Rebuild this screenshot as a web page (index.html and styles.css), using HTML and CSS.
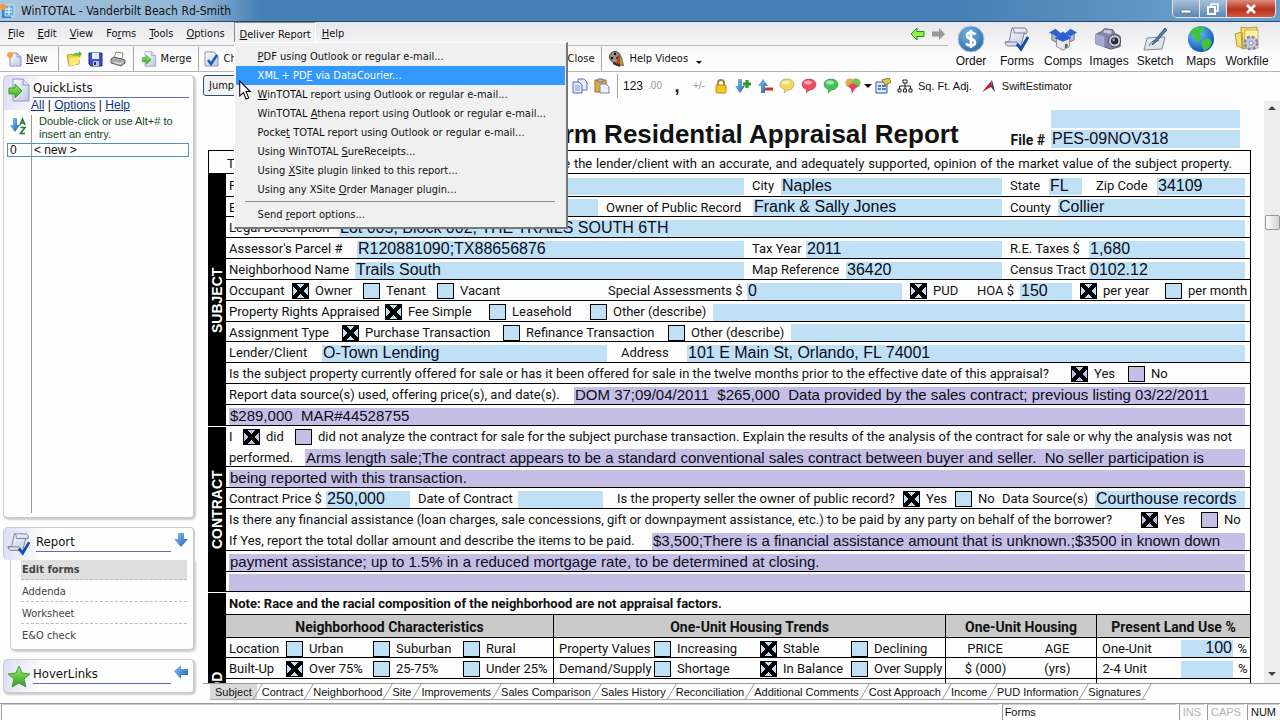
FILE: index.html
```html
<!DOCTYPE html>
<html lang="en">
<head>
<meta charset="utf-8">
<title>WinTOTAL - Vanderbilt Beach Rd-Smith</title>
<link rel="stylesheet" href="styles.css">
</head>
<body>
<svg class="defs" aria-hidden="true">
  <defs>
    <linearGradient id="gb" x1="0" y1="0" x2="1" y2="1"><stop offset="0" stop-color="#8cc8f4"/><stop offset="1" stop-color="#1b5fae"/></linearGradient>
    <linearGradient id="gg" x1="0" y1="0" x2="0" y2="1"><stop offset="0" stop-color="#9df06c"/><stop offset="1" stop-color="#2fa022"/></linearGradient>
    <linearGradient id="gp" x1="0" y1="0" x2="1" y2="1"><stop offset="0" stop-color="#fff"/><stop offset="1" stop-color="#bcc6e2"/></linearGradient>
    <radialGradient id="globe" cx=".35" cy=".3" r=".8"><stop offset="0" stop-color="#6ec4ff"/><stop offset="1" stop-color="#0a47a8"/></radialGradient>
    <radialGradient id="disc" cx=".4" cy=".3" r=".8"><stop offset="0" stop-color="#74b4e2"/><stop offset="1" stop-color="#23679f"/></radialGradient>
    <symbol id="scroll" viewBox="0 0 26 26"><path d="M8 2h13q3 1 2 5l-3 1-3 12H4q-3-1-3-4h4z" fill="url(#gp)" stroke="#7c7f99"/><path d="M8 2q3 1 2 5h11M1 16h12l2 5" fill="none" stroke="#7c7f99"/><path d="M13 18l4 5 7-12" fill="none" stroke="#1550a8" stroke-width="3"/></symbol>
    <symbol id="pagearrow" viewBox="0 0 22 24"><path d="M5 1h10l6 6v16H5z" fill="url(#gp)" stroke="#8a92b8"/><path d="M15 1v6h6" fill="#dfe5f6" stroke="#8a92b8"/><path d="M1 10h6V6l7 7-7 7v-4H1z" fill="url(#gg)" stroke="#3c9a2a"/></symbol>
    <symbol id="bubble" viewBox="0 0 16 16"><path d="M8 1c4 0 7 2 7 5.500S12 12 9 12l-4 3 .5-3.500C3 11 1 9 1 6.500 1 3 4 1 8 1z" stroke="#0003"/><ellipse cx="7" cy="4.500" rx="4" ry="2" fill="#fff8"/></symbol>
  </defs>
</svg>
<div class="app">
  <header class="titlebar">
    <svg class="i16" viewBox="0 0 16 16"><path d="M2 4h9v11H2z" fill="#2f86c9"/><path d="M5 2h9v11H5z" fill="#5fb0e6" stroke="#fff" stroke-width=".6"/><path d="M5 6h7M5 9h7M9 3v9" stroke="#fff"/><circle cx="3" cy="4" r="3" fill="#f3953a"/></svg>
    <h1 class="caption">WinTOTAL - Vanderbilt Beach Rd-Smith</h1>
    <div class="winbtns">
      <button class="wb" aria-label="Minimize"><svg viewBox="0 0 16 14"><path d="M3 8h10v3H3z" fill="#fff" stroke="#456"  stroke-width=".6"/></svg></button>
      <button class="wb" aria-label="Restore"><svg viewBox="0 0 16 14"><path d="M6 2h7v7h-7z" fill="none" stroke="#fff" stroke-width="1.500"/><path d="M3 5h7v7H3z" fill="#7893ae" stroke="#fff" stroke-width="2"/></svg></button>
      <button class="wb close" aria-label="Close"><svg viewBox="0 0 16 14"><path d="M4 3l8 8M12 3l-8 8" stroke="#fff" stroke-width="2.600"/></svg></button>
    </div>
  </header>

  <div class="top">
    <div class="topleft">
      <nav class="menubar">
        <button><u>F</u>ile</button><button><u>E</u>dit</button><button><u>V</u>iew</button><button>Fo<u>r</u>ms</button><button><u>T</u>ools</button><button><u>O</u>ptions</button>
        <div class="menuwrap">
          <button class="open"><u>D</u>eliver Report</button>
          <div class="menu">
            <button><u>P</u>DF using Outlook or regular e-mail...</button>
            <button class="hot">XML + PD<u>F</u> via DataCourier...</button>
            <button><u>W</u>inTOTAL report using Outlook or regular e-mail...</button>
            <button>WinTOTAL <u>A</u>thena report using Outlook or regular e-mail...</button>
            <button>Pocke<u>t</u> TOTAL report using Outlook or regular e-mail...</button>
            <button>Using WinTOTAL <u>S</u>ureReceipts...</button>
            <button>Using <u>X</u>Site plugin linked to this report...</button>
            <button>Using any XSite <u>O</u>rder Manager plugin...</button>
            <hr>
            <button>Send <u>r</u>eport options...</button>
            <svg class="cursor" viewBox="0 0 12 19"><path d="M1 1v14l3.500-3 2.500 6 2.500-1L7 11h4z" fill="#fff" stroke="#000"/></svg>
          </div>
        </div>
        <button><u>H</u>elp</button>
        <span class="grow"></span>
        <button class="nav" aria-label="Back"><svg viewBox="0 0 16 14"><path d="M1 7l6-6v3.500h7v5H7V13z" fill="#8ef04c" stroke="#2b8a1c"/></svg></button>
        <button class="nav" aria-label="Forward"><svg viewBox="0 0 16 14"><path d="M15 7L9 1v3.500H2v5h7V13z" fill="#989898"/></svg></button>
      </nav>
      <div class="toolbar">
        <button class="tb"><svg class="i16" viewBox="0 0 16 16"><path d="M4 2h7l4 4v9H4z" fill="url(#gp)" stroke="#8a92b8"/><path d="M11 2v4h4" fill="none" stroke="#8a92b8"/><circle cx="4" cy="4" r="3" fill="#f7a04a"/></svg><span><u>N</u>ew</span></button>
        <i class="sep"></i>
        <button class="tb" aria-label="Open"><svg class="i16" viewBox="0 0 16 16"><path d="M1 4l5-1 1 2 7-1-1 9-10 2z" fill="#f5d23c" stroke="#a88a10" stroke-width=".7"/><path d="M4 7l11-1-3 7-9 2z" fill="#ffea7a"/><path d="M7 5q0-4 6-3V0l3 3-3 3V4q-3-1-6 1z" fill="#4cbf34"/></svg></button>
        <button class="tb" aria-label="Save"><svg class="i16" viewBox="0 0 16 16"><path d="M1 2h13v13H3l-2-2z" fill="#3a4fc4" stroke="#1c2c7c"/><path d="M4 2h7v6H4z" fill="#e4ecfa"/><path d="M5 10h6v5H5z" fill="#b8c4dc"/><path d="M6 11h2v3H6z" fill="#234"/></svg></button>
        <button class="tb" aria-label="Print"><svg class="i16" viewBox="0 0 16 16"><path d="M4 7l2-6 7 1-1 6z" fill="#fff" stroke="#888"/><path d="M1 8l3-2 11 3v3l-4 3-10-3z" fill="#a6a9ae" stroke="#5e6268"/><path d="M4 11l6 2 3-2" stroke="#eee" fill="none"/></svg></button>
        <i class="sep"></i>
        <button class="tb"><svg class="i16"><use href="#pagearrow"/></svg><span>Merge</span></button>
        <i class="sep"></i>
        <div class="midgroup">
          <button class="tb"><svg class="i16" viewBox="0 0 16 16"><path d="M2 1h9l4 4v10H2z" fill="url(#gp)" stroke="#8a92b8"/><path d="M5 9l3 4 6-9" fill="none" stroke="#1c5cb8" stroke-width="2.500"/></svg><span>Check</span></button>
          <button class="tb">Close</button>
        </div>
        <i class="sep"></i>
        <button class="tb"><svg class="i16" viewBox="0 0 16 16"><circle cx="6" cy="6" r="5.500" fill="#9a938c" stroke="#4a423c"/><circle cx="6" cy="3" r="1.200"/><circle cx="3" cy="7" r="1.200"/><circle cx="8.500" cy="7" r="1.200"/><path d="M9 4l4 2 2 9-8-1z" fill="#c43a2c"/><path d="M11 6l2 1 1 7-3-1z" fill="#7db53c"/><path d="M4 12l7 3" stroke="#333" stroke-width="2"/></svg><span>Help Videos</span><b class="tri low"></b></button>
      </div>
    </div>
    <nav class="bigicons">
      <button><svg viewBox="0 0 28 28"><circle cx="14" cy="14" r="13" fill="url(#disc)" stroke="#b8c8d8"/><path d="M18.500 9.500Q17 7.500 14 7.500q-4 0-4 3 0 2.500 4 3.500t4 3.500q0 3-4 3-3.500 0-5-2M14 5v18" fill="none" stroke="#fff" stroke-width="2.600"/></svg>Order</button>
      <button><svg viewBox="0 0 28 28"><use href="#scroll" x="1" y="1" width="26" height="26"/></svg>Forms</button>
      <button><svg viewBox="0 0 30 28"><path d="M3 8v7l7 4V9zM20 8v10l7-3V8z" fill="#b9b9c4" stroke="#777"/><path d="M0 7l7-4 6 5-5 3zM17 8l6-5 7 4-7 4z" fill="#2c62d0"/><path d="M8 13l7 3 7-3v9l-7 4-7-4z" fill="#e8e8ea" stroke="#888"/><path d="M6 13l9-7 9 7-9 4z" fill="#2a5fd4"/><path d="M17 19h3v4l-3 1z" fill="#666"/></svg>Comps</button>
      <button><svg viewBox="0 0 30 28"><path d="M1 9l6-3 3-3 9 1 2 4 6 3v11l-10 3L1 19z" fill="#8484aa" stroke="#555a78"/><path d="M1 9l9 2v12L1 19z" fill="#a9a8d0"/><path d="M10 4l8 1-1 4-8-2z" fill="#c9cbd8"/><circle cx="21" cy="16" r="6.500" fill="#d4d4d8" stroke="#444"/><circle cx="21" cy="16" r="4" fill="#292c3a"/><circle cx="20" cy="15" r="1.500" fill="#8fa6c8"/></svg>Images</button>
      <button><svg viewBox="0 0 28 28"><path d="M6 13l18-1-3 12-18 1z" fill="#dfe5ec" stroke="#838c98"/><path d="M8 21q4-8 10-5" fill="none" stroke="#667" /><path d="M11 20l2-4L24 3l2 2-11 12z" fill="#4a82b4" stroke="#31485e" stroke-width=".8"/></svg>Sketch</button>
      <button><svg viewBox="0 0 28 28"><circle cx="14" cy="14" r="13" fill="url(#globe)"/><path d="M4 6q5-5 11-4l2 3-4 4 2 3-4 5-3-1-1-5-4-2zM15 16l6-3 4 4-3 6-5 3-2-5z" fill="#41c33c"/></svg>Maps</button>
      <button><svg viewBox="0 0 28 28"><path d="M2 9l7-2 1 16-6-2zM8 2l6 1 10-1v19l-15 3z" fill="#f6dc74" stroke="#b39a3c"/><path d="M12 5h13v18H11z" fill="#fdf0a8" stroke="#b39a3c" stroke-width=".7"/><circle cx="18" cy="18" r="6" fill="#c4c8e0" stroke="#8388a8" stroke-width="3" stroke-dasharray="3 1.700"/><circle cx="18" cy="18" r="5" fill="#c4c8e0"/><circle cx="18" cy="18" r="2" fill="#fff" stroke="#8388a8"/></svg>Workfile</button>
    </nav>
  </div>

  <div class="body">
    <aside class="side">
      <section class="panel quick">
        <h2><svg class="i24"><use href="#pagearrow"/></svg><span>QuickLists</span></h2>
        <p class="links"><a href="#">All</a> | <a href="#">Options</a> | <a href="#">Help</a></p>
        <div class="qgrid">
          <div class="qicon"><svg class="i18" viewBox="0 0 18 18"><path d="M4 1h4v7h3l-5 7-5-7h3z" fill="url(#gb)"/><path d="M11 8l2.500-6L16 8M12 6h3" fill="none" stroke="#1f7a34" stroke-width="1.600"/><path d="M11.500 10.500H16l-4.500 6H16" fill="none" stroke="#1f7a34" stroke-width="1.600"/></svg></div>
          <div class="qhint">Double-click or use Alt+# to insert an entry.</div>
          <div class="qrow"><span>0</span><span>&lt; new &gt;</span></div>
        </div>
      </section>
      <section class="report">
        <h2><svg class="i24"><use href="#scroll"/></svg><span>Report</span><svg class="arrow" viewBox="0 0 16 16"><path d="M5 1h6v6h4l-7 8-7-8h4z" fill="url(#gb)"/></svg></h2>
        <nav class="tasks"><a class="on" href="#">Edit forms</a><a href="#">Addenda</a><a href="#">Worksheet</a><a href="#">E&amp;O check</a></nav>
      </section>
      <section class="panel hover">
        <h2><svg class="i24" viewBox="0 0 24 24"><path d="M12 2l3 7 8 1-6 5 2 8-7-4-7 4 2-8-6-5 8-1z" fill="url(#gg)" stroke="#4b9a3c"/></svg><span>HoverLinks</span><svg class="arrow" viewBox="0 0 16 16"><path d="M1 7l7-6v4h7v6H8v4z" fill="url(#gb)"/></svg></h2>
      </section>
    </aside>

    <main class="main">
      <div class="formbar">
        <div class="jumpgroup"><button class="jump">Jump</button></div>
        <button class="fb" aria-label="Copy"><svg viewBox="0 0 16 16"><path d="M6 1h6l3 3v8H6z" fill="#e8edfb" stroke="#5c6cb8"/><path d="M1 4h6l3 3v8H1z" fill="#dfe6fa" stroke="#5c6cb8"/><path d="M3 8h5M3 10h5M3 12h5" stroke="#8d9ad0"/></svg></button>
        <button class="fb" aria-label="Paste"><svg viewBox="0 0 16 16"><path d="M1 2h11v12H1z" fill="#e3a945" stroke="#9c6c1c"/><path d="M4 1h5v3H4z" fill="#bbb" stroke="#777"/><path d="M6 6h6l3 3v6H6z" fill="#eef2fc" stroke="#7480b0"/></svg></button>
        <i class="sep"></i>
        <button class="fb txt">123</button>
        <button class="fb dim">.00</button>
        <button class="fb comma">,</button>
        <button class="fb dim">+/-</button>
        <button class="fb" aria-label="Lock"><svg viewBox="0 0 16 16"><path d="M5 8V5q0-3 3-3t3 3v3" fill="none" stroke="#9a8a4a" stroke-width="2"/><rect x="3" y="7" width="10" height="8" rx="1" fill="#fcc81e" stroke="#b98808"/></svg></button>
        <button class="fb" aria-label="Add line"><svg viewBox="0 0 16 16"><path d="M3 1h4v7h3l-5 7-5-7h3z" fill="url(#gb)"/><path d="M12 2v8M8 6h8" stroke="#2b9a24" stroke-width="3"/></svg></button>
        <button class="fb" aria-label="Remove line"><svg viewBox="0 0 16 16"><path d="M4 15h4V8h3L6 1 1 8h3z" fill="url(#gb)"/><path d="M8 11h8" stroke="#d8321f" stroke-width="3"/></svg></button>
        <button class="fb" aria-label="Yellow note"><svg class="by"><use href="#bubble"/></svg></button>
        <button class="fb" aria-label="Red note"><svg class="br"><use href="#bubble"/></svg></button>
        <button class="fb" aria-label="Green note"><svg class="bg"><use href="#bubble"/></svg></button>
        <button class="fb" aria-label="Notes"><svg viewBox="0 0 16 16"><circle cx="5" cy="5" r="4.500" fill="#e8a84a"/><circle cx="11" cy="5" r="4.500" fill="#6cc452"/><path d="M3 8q5-5 10 0l-4 4-2 4-1-5z" fill="#dd4658"/></svg></button>
        <b class="tri"></b>
        <button class="fb" aria-label="Properties"><svg viewBox="0 0 16 16"><path d="M1 4h11v11H1z" fill="#dfe9fb" stroke="#2b58a8"/><path d="M3 8h3M3 11h3M7 8h4M7 11h4" stroke="#2b58a8" stroke-width="1.500"/><path d="M7 2l7-2 2 4-6 3z" fill="#e8c84a" stroke="#8a7018"/></svg></button>
        <button class="fb wide"><svg viewBox="0 0 16 16"><path d="M6 2h4v3H6zM1 11h3v3H1zM6.500 11h3v3h-3zM12 11h3v3h-3zM8 5v6M2.500 11V8h11v3" fill="none" stroke="#222"/></svg><span>Sq. Ft. Adj.</span></button>
        <button class="fb wide"><svg viewBox="0 0 16 16"><path d="M1 14L11 2l-1 7z" fill="#c0232c"/><path d="M11 2l3 12-4-5z" fill="#28348c"/></svg><span>SwiftEstimator</span></button>
      </div>

      <div class="pane">
        <form class="form">
          <div class="head">
            <h2 class="formtitle">Uniform Residential Appraisal Report</h2>
            <label for="file2">File #</label>
            <div class="files"><input class="f" id="file1" aria-label="File line 1"><input class="f" id="file2" value="PES-09NOV318"></div>
          </div>
          <p class="purpose">The purpose of this summary appraisal report is to provide the lender/client with an accurate, and adequately supported, opinion of the market value of the subject property.</p>

          <section class="sect">
            <h3>SUBJECT</h3>
            <div class="rows">
              <div class="r r1 tall"><label for="a1">Property Address</label><input class="f" id="a1"><label for="a2">City</label><input class="f" id="a2" value="Naples"><label for="a3">State</label><input class="f" id="a3" value="FL"><label class="far" for="a4">Zip Code</label><input class="f" id="a4" value="34109"></div>
              <div class="r r2 short"><label for="b1">Borrower</label><input class="f" id="b1"><label for="b2">Owner of Public Record</label><input class="f" id="b2" value="Frank &amp; Sally Jones"><label for="b3">County</label><input class="f" id="b3" value="Collier"></div>
              <div class="r r3"><label for="c1">Legal Description</label><input class="f" id="c1" value="Lot 005, Block 002, THE TRAILS SOUTH 6TH"></div>
              <div class="r r4"><label for="d1">Assessor's Parcel #</label><input class="f" id="d1" value="R120881090;TX88656876"><label for="d2">Tax Year</label><input class="f" id="d2" value="2011"><label for="d3">R.E. Taxes $</label><input class="f" id="d3" value="1,680"></div>
              <div class="r r5"><label for="e1">Neighborhood Name</label><input class="f" id="e1" value="Trails South"><label for="e2">Map Reference</label><input class="f" id="e2" value="36420"><label for="e3">Census Tract</label><input class="f" id="e3" value="0102.12"></div>
              <div class="r r6"><span>Occupant</span><label class="o"><input type="checkbox" checked>Owner</label><label class="o"><input type="checkbox">Tenant</label><label class="o"><input type="checkbox">Vacant</label><label class="near" for="g1">Special Assessments $</label><input class="f" id="g1" value="0"><label class="o off"><input type="checkbox" checked>PUD</label><label class="near" for="g2">HOA $</label><input class="f" id="g2" value="150"><label class="o off"><input type="checkbox" checked>per year</label><label class="o"><input type="checkbox">per month</label></div>
              <div class="r r7"><span>Property Rights Appraised</span><label class="o"><input type="checkbox" checked>Fee Simple</label><label class="o"><input type="checkbox">Leasehold</label><label class="o"><input type="checkbox">Other (describe)</label><input class="f" aria-label="Other rights"></div>
              <div class="r r8 short"><span>Assignment Type</span><label class="o"><input type="checkbox" checked>Purchase Transaction</label><label class="o"><input type="checkbox">Refinance Transaction</label><label class="o"><input type="checkbox">Other (describe)</label><input class="f" aria-label="Other assignment"></div>
              <div class="r r9"><label for="h1">Lender/Client</label><input class="f" id="h1" value="O-Town Lending"><label class="far" for="h2">Address</label><input class="f" id="h2" value="101 E Main St, Orlando, FL 74001"></div>
              <div class="r r10 pur"><span>Is the subject property currently offered for sale or has it been offered for sale in the twelve months prior to the effective date of this appraisal?</span><label class="o"><input type="checkbox" checked>Yes</label><label class="o"><input type="checkbox">No</label></div>
              <div class="r r11 pur"><label for="j1">Report data source(s) used, offering price(s), and date(s).</label><input class="f" id="j1" value="DOM 37;09/04/2011  $265,000  Data provided by the sales contract; previous listing 03/22/2011"></div>
              <div class="r full pur"><input class="f" aria-label="Offering, continued" value="$289,000  MAR#44528755"></div>
            </div>
          </section>

          <section class="sect">
            <h3>CONTRACT</h3>
            <div class="rows">
              <div class="r r13 pur open-b"><span>I</span><label class="o"><input type="checkbox" checked>did</label><label class="o"><input type="checkbox">did not analyze the contract for sale for the subject purchase transaction. Explain the results of the analysis of the contract for sale or why the analysis was not</label></div>
              <div class="r r14 short pur"><label for="k1">performed.</label><input class="f" id="k1" value="Arms length sale;The contract appears to be a standard conventional sales contract between buyer and seller.  No seller participation is"></div>
              <div class="r full pur"><input class="f" aria-label="Analysis, continued" value="being reported with this transaction."></div>
              <div class="r r16"><label for="m1">Contract Price $</label><input class="f" id="m1" value="250,000"><label for="m2">Date of Contract</label><input class="f" id="m2"><span class="far">Is the property seller the owner of public record?</span><label class="o"><input type="checkbox" checked>Yes</label><label class="o"><input type="checkbox">No</label><label class="near" for="m3">Data Source(s)</label><input class="f" id="m3" value="Courthouse records"></div>
              <div class="r r17 pur open-b"><span>Is there any financial assistance (loan charges, sale concessions, gift or downpayment assistance, etc.) to be paid by any party on behalf of the borrower?</span><label class="o"><input type="checkbox" checked>Yes</label><label class="o"><input type="checkbox">No</label></div>
              <div class="r r18 pur"><label for="n1">If Yes, report the total dollar amount and describe the items to be paid.</label><input class="f" id="n1" value="$3,500;There is a financial assistance amount that is unknown.;$3500 in known down"></div>
              <div class="r full pur"><input class="f" aria-label="Assistance, continued" value="payment assistance; up to 1.5% in a reduced mortgage rate, to be determined at closing."></div>
              <div class="r full short pur"><input class="f" aria-label="Assistance, last line"></div>
            </div>
          </section>

          <section class="sect last">
            <h3>NEIGHBORHOOD</h3>
            <div class="rows">
              <div class="r tall note">Note: Race and the racial composition of the neighborhood are not appraisal factors.</div>
              <div class="quad ghead"><b>Neighborhood Characteristics</b><b>One-Unit Housing Trends</b><b>One-Unit Housing</b><b>Present Land Use %</b></div>
              <div class="quad short">
                <div class="qa"><span>Location</span><label class="o"><input type="checkbox">Urban</label><label class="o"><input type="checkbox">Suburban</label><label class="o"><input type="checkbox">Rural</label></div>
                <div class="qb"><span>Property Values</span><label class="o"><input type="checkbox">Increasing</label><label class="o"><input type="checkbox" checked>Stable</label><label class="o"><input type="checkbox">Declining</label></div>
                <div class="qc"><span>PRICE</span><span>AGE</span></div>
                <div class="qd"><label for="p1">One-Unit</label><input class="f num" id="p1" value="100"><span>%</span></div>
              </div>
              <div class="quad">
                <div class="qa"><span>Built-Up</span><label class="o"><input type="checkbox" checked>Over 75%</label><label class="o"><input type="checkbox">25-75%</label><label class="o"><input type="checkbox">Under 25%</label></div>
                <div class="qb"><span>Demand/Supply</span><label class="o"><input type="checkbox">Shortage</label><label class="o"><input type="checkbox" checked>In Balance</label><label class="o"><input type="checkbox">Over Supply</label></div>
                <div class="qc"><span>$ (000)</span><span>(yrs)</span></div>
                <div class="qd"><label for="p2">2-4 Unit</label><input class="f num" id="p2"><span>%</span></div>
              </div>
              <div class="quad"><div class="qa"></div><div class="qb"></div><div class="qc"></div><div class="qd"></div></div>
            </div>
          </section>
        </form>
        <div class="vscroll"><button aria-label="Scroll up"><svg viewBox="0 0 8 8"><path d="M4 2l4 4H0z" fill="#444"/></svg></button><div class="thumb"></div><button aria-label="Scroll down"><svg viewBox="0 0 8 8"><path d="M4 6l4-4H0z" fill="#444"/></svg></button></div>
      </div>

      <nav class="tabs"><button class="sel">Subject</button><button>Contract</button><button>Neighborhood</button><button>Site</button><button>Improvements</button><button>Sales Comparison</button><button>Sales History</button><button>Reconciliation</button><button>Additional Comments</button><button>Cost Approach</button><button>Income</button><button>PUD Information</button><button>Signatures</button></nav>
    </main>
  </div>
  <footer class="status"><span class="s0"></span><span class="s1">Forms</span><span class="s2 dimmed">INS</span><span class="s2 dimmed">CAPS</span><span class="s2">NUM</span></footer>
</div>
</body>
</html>
```
FILE: styles.css
```css
* { box-sizing: border-box; }
body { margin: 0; font: 11px/14px "DejaVu Sans Condensed", "DejaVu Sans", sans-serif; color: #111; background: #fdfdfd; }
button { font: inherit; color: inherit; background: none; border: 0; padding: 0; white-space: nowrap; }
h1, h2, h3, p { margin: 0; font-weight: normal; }
.defs { position: absolute; width: 0; height: 0; }
.app { height: 100vh; display: flex; flex-direction: column; overflow: hidden; }
.grow { flex: 1; }
.i16 { width: 16px; height: 16px; flex: none; }
.i18 { width: 18px; height: 18px; }
.i24 { width: 24px; height: 24px; flex: none; }

/* title bar */
.titlebar { display: flex; align-items: center; height: 22px; flex: none; background: linear-gradient(90deg, #a9c5de 0, #8fb4d5 200px, #4580b4 260px, #4580b4 960px, #6b9cc8 1200px); border-bottom: 1px solid #24496e; }
.caption { flex: 1; margin-left: 5px; font-size: 12px; }
.winbtns { display: flex; align-self: flex-start; margin-right: 4px; border: 1px solid #dce8f4; border-top: 0; border-radius: 0 0 5px 5px; overflow: hidden; }
.wb { width: 27px; height: 17px; background: linear-gradient(#a8c0da, #5e88b2); border-right: 1px solid #dce8f4; display: grid; place-items: center; }
.wb svg { width: 16px; height: 14px; }
.wb.close { width: 48px; border: 0; background: linear-gradient(#dd8d7e, #b8301c 55%, #cf5a40); }

/* menu and tool bars */
.top { display: flex; flex: none; height: 50px; background: linear-gradient(#e6e7ea, #fcfcfc 70%); border-bottom: 1px solid #b4b4b4; }
.topleft { flex: 1; }
.menubar { display: flex; align-items: center; height: 24px; padding-left: 2px; border-bottom: 1px solid #b9b9bb; }
.menubar > button { padding: 0 7px 0 6px; }
.menubar > .nav { padding: 0 2px; }
.nav svg { width: 16px; height: 14px; display: block; }
.menuwrap { position: relative; align-self: stretch; display: flex; margin-left: 2px; }
.open { padding: 2px 4px 0 5px; border: 1px solid #8c8c8c; border-bottom: 0; border-right-color: #fff; background: #f0f0f0; }
.menu { position: absolute; z-index: 5; left: 0; top: 20px; width: 334px; padding: 4px 1px 3px; background: #f0f0f0; border: 1px solid #fff; border-right: 2px solid #777; border-bottom: 2px solid #777; display: flex; flex-direction: column; }
.menu button { height: 19px; padding-left: 22px; text-align: left; }
.menu .hot { background: #3399ff; color: #fff; }
.menu hr { width: 94%; margin: 2px auto 3px; border: 0; border-top: 1px solid #8c8c8c; }
.cursor { position: absolute; left: 3px; top: 37px; width: 14px; height: 20px; }
.toolbar { display: flex; align-items: center; height: 25px; padding-left: 6px; }
.tb { display: flex; align-items: center; gap: 4px; padding: 0 3px; }
.toolbar .tb:first-child { padding: 0 6px 0 0; }
.sep { width: 1px; height: 24px; background: #a5a5a5; margin: 0 4px; }
.midgroup { display: flex; justify-content: space-between; flex: 0 0 394px; }
.tri { border: 4px solid transparent; border-top-color: #111; border-bottom: 0; }
.tri.low { margin: 8px 0 0 4px; border-width: 3px; border-bottom: 0; }
.bigicons { display: flex; padding: 3px 10px 0 0; }
.bigicons button { width: 46px; display: flex; flex-direction: column; align-items: center; font-family: "Liberation Sans", sans-serif; font-size: 12px; }
.bigicons svg { width: 28px; height: 28px; margin-bottom: 1px; }

/* left panels */
.body { flex: 1; display: flex; min-height: 0; }
.side { width: 203px; flex: none; padding: 3px 8px 9px 3px; display: flex; flex-direction: column; gap: 8px; }
.panel { border: 1px solid #ccc; border-radius: 5px; border-right-width: 2px; border-bottom-width: 2px; background: linear-gradient(100deg, #dcdcf4 0, #fdfdfd 40px) 0 0 / 100% 34px no-repeat, #fdfdfd; box-shadow: 1px 1px 2px #ccc; }
.side h2 { display: flex; align-items: flex-start; gap: 2px; height: 24px; padding: 4px 4px 0 3px; font-size: 13px; }
.side h2 span { flex: 1; line-height: 19px; height: 20px; border-bottom: 1px solid #6a6ab0; }
.arrow { width: 16px; height: 16px; flex: none; }
.quick { flex: 1; display: flex; flex-direction: column; }
.side .quick h2 { height: 22px; padding-top: 2px; }
.links { padding-left: 27px; line-height: 14px; font-size: 12px; font-family: "Liberation Sans", sans-serif; }
.links a { color: #123380; }
.qgrid { flex: 1; display: grid; grid-template-columns: 28px 1fr; grid-template-rows: 28px 14px 1fr; margin: 3px 4px 4px 3px; font: 12px/13px "Liberation Sans", sans-serif; background: linear-gradient(#999, #999) 24px 0 / 1px 100% no-repeat; }
.qicon { padding: 2px 0 0 2px; }
.qhint { padding-left: 4px; color: #17461c; font-size: 11px; }
.qrow { grid-column: 1 / 3; display: grid; grid-template-columns: 24px 1fr; padding-left: 2px; border: 1px solid #4f94b8; line-height: 12px; }
.side .report h2 { height: 33px; border: 1px solid #ccc; border-right-width: 2px; border-bottom: 0; border-radius: 5px 5px 0 5px; background: linear-gradient(100deg, #dcdcf4 0, #fdfdfd 40px); }
.report h2 .i24 { margin-right: 3px; }
.tasks { display: flex; flex-direction: column; margin-left: 7px; padding: 0 6px 4px 10px; gap: 2px; border: 1px solid #ccc; border-width: 0 2px 2px 1px; border-radius: 0 0 5px 5px; box-shadow: 1px 1px 2px #ccc; }
.tasks a { color: #444; text-decoration: none; line-height: 19px; padding-left: 1px; border-bottom: 1px dashed #bbb; }
.tasks a:last-child { border: 0; }
.tasks .on { background: #dedede; font-weight: bold; }
.hover { height: 35px; }

/* form tool bar */
.main { flex: 1; display: flex; flex-direction: column; min-width: 0; }
.formbar { height: 27px; flex: none; display: flex; align-items: center; font-family: "Liberation Sans", sans-serif; }
.jumpgroup { width: 366px; }
.jump { height: 21px; padding: 0 5px; border: 1px solid #2c4c6c; border-radius: 3px; background: #f2f2f2; font-family: "DejaVu Sans Condensed", sans-serif; }
.fb { width: 22px; height: 20px; display: flex; align-items: center; justify-content: center; flex: none; }
.fb svg { width: 16px; height: 16px; flex: none; }
.fb.wide { width: auto; padding: 0 6px 0 3px; gap: 5px; }
.txt { font-size: 12px; }
.comma { font-weight: bold; font-size: 18px; }
.dim { color: #999; font-size: 10px; }
.by { fill: #ecd95a; } .br { fill: #ee4a60; } .bg { fill: #42c452; }

/* appraisal form */
.pane { flex: 1; display: flex; min-height: 0; }
.form { flex: 1; overflow: hidden; margin: 0 13px 0 5px; font: 13px/16px Roboto, "Liberation Sans", sans-serif; color: #111; white-space: nowrap; }
.f { width: 100%; min-width: 0; height: 17px; padding: 0 1px 1px; border: 0; border-radius: 0; background: #c0e1f5; font: 16px/16px "Liberation Sans", sans-serif; color: #0c0c20; }
.pur .f { background: #c6bfe5; font-size: 15px; }
.head { display: flex; justify-content: flex-end; align-items: flex-end; height: 52px; padding: 0 11px 2px 0; border-bottom: 1px solid #000; }
.formtitle { margin-right: 52px; font: bold 26px/28px "Liberation Sans", sans-serif; }
.head label { font-weight: bold; font-size: 14px; margin-right: 6px; }
.files { width: 189px; display: grid; gap: 2px; }
.files .f { height: 18px; }
.purpose { height: 23px; line-height: 25px; padding: 0 18px; border: solid #000; border-width: 0 1px 1px; text-align: justify; text-align-last: justify; white-space: normal; overflow: hidden; }
.sect { display: flex; border-right: 1px solid #000; }
.sect h3 { width: 18px; flex: none; background: #000; color: #fff; font: bold 14px/18px "Liberation Sans", sans-serif; writing-mode: vertical-rl; transform: rotate(180deg); text-align: center; border-bottom: 1px solid #fff; }
.sect:first-of-type h3 { border-bottom-color: #000; }
.sect.last h3 { text-align: right; padding-bottom: 79px; }
.sect.last { height: 200px; }
.rows { flex: 1; min-width: 0; }
.r, .quad { height: 21px; border-bottom: 1px solid #000; }
.r { display: grid; align-items: center; padding: 2px 5px 0 3px; }
.short { height: 20px; }
.tall { height: 23px; }
.open-b { border-color: transparent; }
.r > label:not(:first-child), .r > span:not(:first-child) { padding-left: 8px; }
.r > .o:not(:first-child), .r > .near:not(:first-child) { padding-left: 0; }
.r > .far:not(:first-child) { padding-left: 14px; }
.r > .off:not(:first-child) { padding-left: 8px; }
.o { display: flex; align-items: center; gap: 6px; }
.o input { appearance: none; width: 17px; height: 16px; margin: 0; flex: none; border: 1px solid #000; background: #c0e1f5; }
.pur .o input { background: #c6bfe5; }
.o input:checked, .pur .o input:checked { background-image: linear-gradient(45deg, transparent 41%, #000 41% 59%, transparent 59%), linear-gradient(-45deg, transparent 41%, #000 41% 59%, transparent 59%); }
.r1 { grid-template-columns: 111px 1fr 37px 221px 47px 33px 75px 88px; }
.r2 { grid-template-columns: 61px 1fr 155px 249px 56px 187px; }
.r3 { grid-template-columns: 110px 1fr; }
.r4 { grid-template-columns: 128px 1fr 62px 196px 87px 156px; }
.r5 { grid-template-columns: 126px 1fr 102px 156px 87px 156px; }
.r6 { grid-template-columns: 63px 71px 74px 171px 139px 1fr 75px 43px 52px 93px 80px; }
.r7 { grid-template-columns: 156px 104px 101px 123px 1fr; }
.r8 { grid-template-columns: 113px 161px 165px 123px 1fr; }
.r9 { grid-template-columns: 93px 285px 80px 1fr; }
.r10 { grid-template-columns: 1fr 57px 117px; }
.r11 { grid-template-columns: 345px 1fr; }
.r13 { grid-template-columns: 14px 52px 1fr; }
.r14 { grid-template-columns: 76px 1fr; }
.r16 { grid-template-columns: 97px 84px 108px 85px 1fr 52px 47px 93px 150px; }
.r17 { grid-template-columns: 1fr 60px 44px; }
.r18 { grid-template-columns: 423px 1fr; }
.note { font-weight: bold; }
.quad { display: grid; grid-template-columns: 328px 1fr 151px 153px; }
.quad.short { height: 20px; }
.quad > * { border-right: 1px solid #000; display: grid; align-items: center; padding: 2px 3px 0; }
.quad > :last-child { border-right: 0; }
.quad.ghead { height: 23px; background: #cacaca; text-align: center; font-size: 14px; }
.quad .qa { grid-template-columns: 57px 87px 90px 1fr; }
.quad .qb { grid-template-columns: 95px 106px 91px 1fr; padding-left: 5px; }
.quad .qc { grid-template-columns: 1fr 1fr; text-align: center; }
.quad .qd { grid-template-columns: 79px 1fr 14px; padding-left: 5px; }
.qd span { text-align: right; }
.num { text-align: right; }

/* scroll bar, tabs, status */
.vscroll { width: 16px; margin: 2px 0 0; background: #ededed; display: flex; flex-direction: column; align-items: center; }
.vscroll button { height: 16px; }
.vscroll svg { width: 8px; height: 8px; }
.thumb { width: 15px; height: 15px; margin: 98px 0 auto; border: 1px solid #999; border-radius: 2px; background: linear-gradient(90deg, #fff, #d4d4d4); }
.tabs { flex: none; height: 20px; border-top: 1px solid #999; padding-left: 7px; display: flex; align-items: flex-start; font-family: "Liberation Sans", sans-serif; }
.tabs button { position: relative; height: 16px; line-height: 16px; padding: 0 5px; border-bottom: 1px solid #aaa; }
.tabs button::after { content: ""; position: absolute; right: -1px; top: 0; width: 1px; height: 16px; background: #999; transform: skewX(-30deg); }
.tabs .sel { background: #d8d8d8; }
.status { flex: none; height: 17px; display: flex; gap: 3px; font: 11px/15px "Liberation Sans", sans-serif; border-top: 1px solid #999; padding: 0 1px; }
.status span { border-left: 1px solid #999; border-top: 1px solid #ccc; }
.s0 { flex: 1; }
.s1 { width: 174px; padding-left: 2px; }
.s2 { padding: 0 3px; }
.dimmed { color: #b4b4b4; }
```
